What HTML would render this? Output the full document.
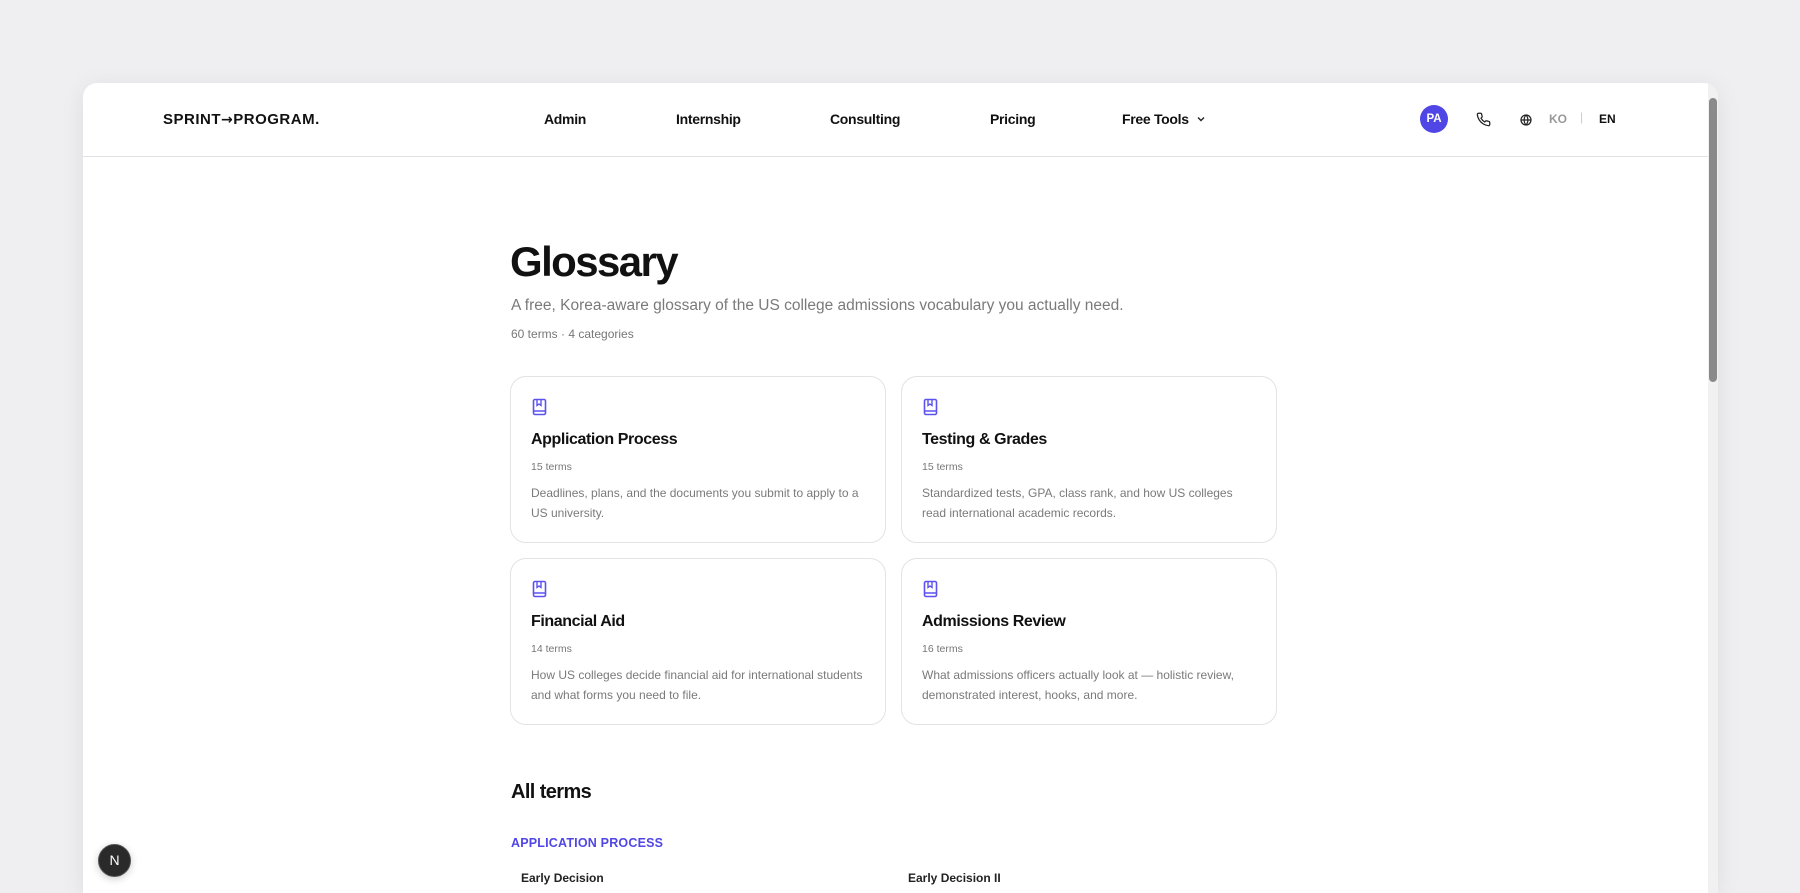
<!DOCTYPE html>
<html><head><meta charset="utf-8"><style>
*{margin:0;padding:0;box-sizing:border-box}
html,body{width:1800px;height:893px;overflow:hidden}
body{background:#efeff1;font-family:"Liberation Sans",sans-serif;color:#111;position:relative}
.frame{position:absolute;left:83px;top:83px;width:1635px;height:810px;background:#fff;border-radius:14px 14px 0 0;box-shadow:0 4px 24px rgba(0,0,0,.08);overflow:hidden}
.hdr{position:absolute;left:0;top:0;width:100%;height:74px;border-bottom:1.5px solid #e2e2e4}
.abs{position:absolute;white-space:nowrap}
.nav{font-size:14px;font-weight:bold;top:28px;letter-spacing:-.3px}
.card{position:absolute;width:376px;height:167px;border:1px solid #e3e3e6;border-radius:16px}
.card svg{position:absolute;left:21px;top:21px}
.card h3{position:absolute;left:20px;top:54px;font-size:16px;font-weight:bold;letter-spacing:-.4px}
.card .n{position:absolute;left:20px;top:84px;font-size:10.5px;color:#777}
.card p{position:absolute;left:20px;top:107px;width:338px;font-size:12px;line-height:19.5px;color:#7a7a7a}
.sb{position:absolute;left:1625px;top:0;width:10px;height:810px;background:#f1f1f1}
.thumb{position:absolute;left:1626px;top:15px;width:8px;height:284px;background:#8a8a8a;border-radius:4px}
</style></head><body>
<div class="frame">
 <div class="hdr">
  <div class="abs" style="left:80px;top:28px;font-size:15px;font-weight:bold;letter-spacing:.5px">SPRINT<span style="font-family:'DejaVu Sans';font-size:14px">→</span>PROGRAM.</div>
  <div class="abs nav" style="left:461px">Admin</div>
  <div class="abs nav" style="left:593px">Internship</div>
  <div class="abs nav" style="left:747px">Consulting</div>
  <div class="abs nav" style="left:907px">Pricing</div>
  <div class="abs nav" style="left:1039px">Free Tools</div>
  <svg class="abs" style="left:1113px;top:32px" width="10" height="8" viewBox="0 0 10 8"><path d="M2 2.5l3 3 3-3" stroke="#222" stroke-width="1.4" fill="none"/></svg>
  <div class="abs" style="left:1337px;top:22px;width:28px;height:28px;border-radius:50%;background:#4f46e5;color:#fff;font-size:11.5px;font-weight:bold;text-align:center;line-height:28px">PA</div>
  <svg class="abs" style="left:1393px;top:29px" width="15" height="15" viewBox="0 0 24 24"><path d="M22 16.9v3a2 2 0 0 1-2.2 2 19.8 19.8 0 0 1-8.6-3.1 19.5 19.5 0 0 1-6-6A19.8 19.8 0 0 1 2.1 4.2 2 2 0 0 1 4.1 2h3a2 2 0 0 1 2 1.7c.1 1 .4 1.9.7 2.8a2 2 0 0 1-.5 2.1L8 9.9a16 16 0 0 0 6 6l1.3-1.3a2 2 0 0 1 2.1-.4c.9.3 1.8.6 2.8.7a2 2 0 0 1 1.7 2z" stroke="#222" stroke-width="2" fill="none"/></svg>
  <svg class="abs" style="left:1437px;top:31px" width="12" height="12" viewBox="0 0 24 24"><circle cx="12" cy="12" r="10" stroke="#222" stroke-width="2.5" fill="none"/><path d="M2 12h20M12 2a15 15 0 0 1 0 20M12 2a15 15 0 0 0 0 20" stroke="#222" stroke-width="2.5" fill="none"/></svg>
  <div class="abs" style="left:1466px;top:29px;font-size:12px;font-weight:bold;color:#999">KO</div>
  <div class="abs" style="left:1497px;top:27px;font-size:12px;color:#ccc">|</div>
  <div class="abs" style="left:1516px;top:29px;font-size:12px;font-weight:bold">EN</div>
 </div>
 <div class="abs" style="left:427px;top:155px;font-size:42px;font-weight:bold;letter-spacing:-1.6px">Glossary</div>
 <div class="abs" style="left:428px;top:214px;font-size:15.5px;color:#7a7a7a">A free, Korea-aware glossary of the US college admissions vocabulary you actually need.</div>
 <div class="abs" style="left:428px;top:244px;font-size:12px;color:#777">60 terms · 4 categories</div>

 <div class="card" style="left:427px;top:293px"><svg width="16" height="18" viewBox="0 0 16 18"><rect x="1.5" y="1.5" width="12" height="15" rx="1.5" stroke="#5b52f0" stroke-width="1.6" fill="none"/><path d="M1.5 13h12M5 1.5v6l2-1.5 2 1.5v-6" stroke="#5b52f0" stroke-width="1.4" fill="none"/></svg><h3>Application Process</h3><div class="n">15 terms</div><p>Deadlines, plans, and the documents you submit to apply to a US university.</p></div>
 <div class="card" style="left:818px;top:293px"><svg width="16" height="18" viewBox="0 0 16 18"><rect x="1.5" y="1.5" width="12" height="15" rx="1.5" stroke="#5b52f0" stroke-width="1.6" fill="none"/><path d="M1.5 13h12M5 1.5v6l2-1.5 2 1.5v-6" stroke="#5b52f0" stroke-width="1.4" fill="none"/></svg><h3>Testing &amp; Grades</h3><div class="n">15 terms</div><p>Standardized tests, GPA, class rank, and how US colleges<br>read international academic records.</p></div>
 <div class="card" style="left:427px;top:475px"><svg width="16" height="18" viewBox="0 0 16 18"><rect x="1.5" y="1.5" width="12" height="15" rx="1.5" stroke="#5b52f0" stroke-width="1.6" fill="none"/><path d="M1.5 13h12M5 1.5v6l2-1.5 2 1.5v-6" stroke="#5b52f0" stroke-width="1.4" fill="none"/></svg><h3>Financial Aid</h3><div class="n">14 terms</div><p>How US colleges decide financial aid for international students<br>and what forms you need to file.</p></div>
 <div class="card" style="left:818px;top:475px"><svg width="16" height="18" viewBox="0 0 16 18"><rect x="1.5" y="1.5" width="12" height="15" rx="1.5" stroke="#5b52f0" stroke-width="1.6" fill="none"/><path d="M1.5 13h12M5 1.5v6l2-1.5 2 1.5v-6" stroke="#5b52f0" stroke-width="1.4" fill="none"/></svg><h3>Admissions Review</h3><div class="n">16 terms</div><p>What admissions officers actually look at — holistic review,<br>demonstrated interest, hooks, and more.</p></div>

 <div class="abs" style="left:428px;top:698px;font-size:20px;font-weight:bold;letter-spacing:-.6px">All terms</div>
 <div class="abs" style="left:428px;top:753px;font-size:12.5px;font-weight:bold;color:#5046e5;letter-spacing:.2px">APPLICATION PROCESS</div>
 <div class="abs" style="left:438px;top:788px;font-size:12px;font-weight:bold;color:#222">Early Decision</div>
 <div class="abs" style="left:825px;top:788px;font-size:12px;font-weight:bold;color:#222">Early Decision II</div>
 <div class="sb"></div><div class="thumb"></div>
</div>
<div class="abs" style="left:98px;top:844px;width:33px;height:33px;border-radius:50%;background:#2a2a2a;border:1.5px solid #555;color:#fff;font-size:14px;text-align:center;line-height:30px;box-shadow:0 2px 8px rgba(0,0,0,.2)">N</div>
</body></html>
